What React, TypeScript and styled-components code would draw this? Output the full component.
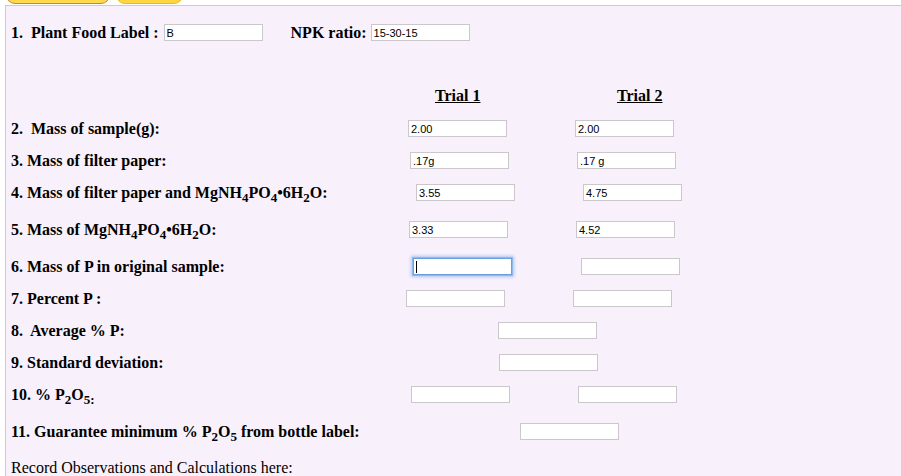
import styled, { createGlobalStyle } from "styled-components";

const GlobalStyle = createGlobalStyle`
  html, body {
    margin: 0;
    padding: 0;
    background: #ffffff;
    overflow: hidden;
  }
  body {
    font-family: "Liberation Serif", "Times New Roman", serif;
    font-size: 16px;
    color: #000;
  }
`;

const Page = styled.div`
  width: 901px;
  height: 476px;
  overflow: hidden;
`;

const TabStrip = styled.div`
  display: flex;
  gap: 6px;
  padding-left: 6px;
  height: 5px;
  overflow: hidden;
`;

const Tab = styled.div<{ $w: number; $edge: string; $fill: string }>`
  width: ${(p) => p.$w}px;
  height: 24px;
  margin-top: -20px;
  box-sizing: border-box;
  background: ${(p) => p.$fill};
  border: 1px solid ${(p) => p.$edge};
  border-radius: 0 0 9px 9px;
`;

const Panel = styled.div`
  margin-left: 5px;
  width: 920px;
  min-height: 480px;
  background: #f8f1fc;
  border-top: 1px solid #cfcacf;
  border-left: 1px solid #cfcacf;
  padding: 10px 0 0 5px;
  box-sizing: border-box;
`;

const TopRow = styled.div`
  display: flex;
  align-items: center;
  height: 33px;
`;

const Label = styled.span<{ $gap?: number }>`
  font-weight: bold;
  white-space: pre;
  margin-left: ${(p) => p.$gap ?? 0}px;

  sub {
    font-size: 13px;
    vertical-align: -4px;
    line-height: 0;
  }
`;

const Row = styled.div<{ $h: number; $top?: number }>`
  display: grid;
  grid-template-columns: 395px 167px 1fr;
  align-items: center;
  height: ${(p) => p.$h}px;
  margin-top: ${(p) => p.$top ?? 0}px;
`;

const Heading = styled.span<{ $shift: number }>`
  font-weight: bold;
  text-decoration: underline;
  margin-left: ${(p) => p.$shift}px;
`;

const Field = styled.span<{ $shift: number; $wide?: boolean; $focused?: boolean }>`
  position: relative;
  display: inline-flex;
  margin-left: ${(p) => p.$shift}px;
  grid-column: ${(p) => (p.$wide ? "2 / -1" : "auto")};
  justify-self: start;

  &::after {
    content: "";
    display: ${(p) => (p.$focused ? "block" : "none")};
    position: absolute;
    left: 3px;
    top: 3px;
    width: 1px;
    height: 12px;
    background: #000;
  }
`;

const Input = styled.input<{ $focused?: boolean }>`
  width: 99px;
  height: 17px;
  box-sizing: border-box;
  margin: 0;
  padding: 0 2px;
  border: 1px solid ${(p) => (p.$focused ? "#6a9fe0" : "#cbc7cb")};
  box-shadow: ${(p) =>
    p.$focused ? "0 0 0 1px #8fbaf0, 0 0 3px 2px rgba(110,160,235,0.55)" : "none"};
  border-radius: 0;
  background: #fff;
  font-family: "Liberation Sans", Arial, sans-serif;
  font-size: 11px;
  color: #000;
  outline: none;
`;

const Note = styled.div`
  height: 32px;
  display: flex;
  align-items: center;
`;

type Cell = { value?: string; shift: number; wide?: boolean; focused?: boolean };

const rows: { label: React.ReactNode; h: number; cells: Cell[] }[] = [
  {
    label: "2.  Mass of sample(g):",
    h: 33,
    cells: [
      { value: "2.00", shift: 2 },
      { value: "2.00", shift: 2 },
    ],
  },
  {
    label: "3. Mass of filter paper:",
    h: 31,
    cells: [
      { value: ".17g", shift: 4 },
      { value: ".17 g", shift: 4 },
    ],
  },
  {
    label: (
      <>
        4. Mass of filter paper and MgNH<sub>4</sub>PO<sub>4</sub>•6H<sub>2</sub>O:
      </>
    ),
    h: 33,
    cells: [
      { value: "3.55", shift: 10 },
      { value: "4.75", shift: 10 },
    ],
  },
  {
    label: (
      <>
        5. Mass of MgNH<sub>4</sub>PO<sub>4</sub>•6H<sub>2</sub>O:
      </>
    ),
    h: 41,
    cells: [
      { value: "3.33", shift: 3 },
      { value: "4.52", shift: 3 },
    ],
  },
  {
    label: "6. Mass of P in original sample:",
    h: 33,
    cells: [
      { shift: 7, focused: true },
      { shift: 8 },
    ],
  },
  {
    label: "7. Percent P :",
    h: 31,
    cells: [{ shift: 0 }, { shift: 0 }],
  },
  {
    label: "8.  Average % P:",
    h: 33,
    cells: [{ shift: 92, wide: true }],
  },
  {
    label: "9. Standard deviation:",
    h: 31,
    cells: [{ shift: 93, wide: true }],
  },
  {
    label: (
      <>
        10. % P<sub>2</sub>O<sub>5:</sub>
      </>
    ),
    h: 33,
    cells: [{ shift: 5 }, { shift: 5 }],
  },
  {
    label: (
      <>
        11. Guarantee minimum % P<sub>2</sub>O<sub>5</sub> from bottle label:
      </>
    ),
    h: 41,
    cells: [{ shift: 114, wide: true }],
  },
];

export default function App() {
  return (
    <Page>
      <GlobalStyle />
      <TabStrip>
        <Tab $w={104} $fill="#ffd94e" $edge="#c9872c" />
        <Tab $w={67} $fill="#ffd63f" $edge="#e9b82a" />
      </TabStrip>
      <Panel>
        <TopRow>
          <Label>1.  Plant Food Label :</Label>
          <Field $shift={5}>
            <Input defaultValue="B" />
          </Field>
          <Label $gap={28}>NPK ratio:</Label>
          <Field $shift={4}>
            <Input defaultValue="15-30-15" />
          </Field>
        </TopRow>
        <Row $h={32} $top={31}>
          <span />
          <Heading $shift={29}>Trial 1</Heading>
          <Heading $shift={44}>Trial 2</Heading>
        </Row>
        {rows.map((r, i) => (
          <Row key={i} $h={r.h}>
            <Label>{r.label}</Label>
            {r.cells.map((c, j) => (
              <Field key={j} $shift={c.shift} $wide={c.wide} $focused={c.focused}>
                <Input defaultValue={c.value} $focused={c.focused} />
              </Field>
            ))}
          </Row>
        ))}
        <Note>Record Observations and Calculations here:</Note>
      </Panel>
    </Page>
  );
}
